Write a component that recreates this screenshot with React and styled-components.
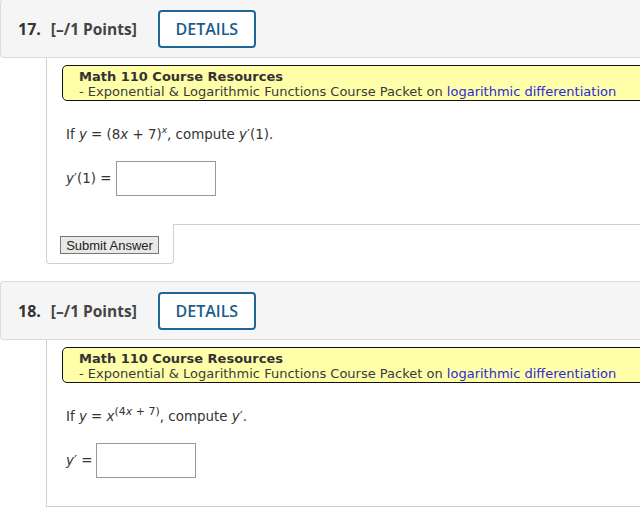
import React from 'react'
import { styled, createGlobalStyle } from 'styled-components'

const GlobalStyle = createGlobalStyle`
  html, body {
    margin: 0;
    padding: 0;
    background: #fff;
    overflow: hidden;
  }
`

function Question({ number, prompt, answerLabel, inputOffset, submit }) {
  return (
    <QuestionWrap>
      <Header>
        <Number>{number}.</Number>
        <Points>[–/1 Points]</Points>
        <DetailsButton>DETAILS</DetailsButton>
      </Header>
      <Body>
        <Content closed={!submit}>
          <Resources>
            <ResTitle>Math 110 Course Resources</ResTitle>
            <div>
              - Exponential &amp; Logarithmic Functions Course Packet on{' '}
              <ResLink>logarithmic differentiation</ResLink>
            </div>
          </Resources>
          <Prompt>{prompt}</Prompt>
          <AnswerRow>
            <span>{answerLabel}</span>
            <AnswerInput type="text" offset={inputOffset} />
          </AnswerRow>
        </Content>
        {submit && (
          <Footer>
            <SubmitTab>
              <SubmitButton>Submit Answer</SubmitButton>
            </SubmitTab>
            <FooterRest />
          </Footer>
        )}
      </Body>
    </QuestionWrap>
  )
}

function App() {
  return (
    <Page>
      <GlobalStyle />
      <Question
        number={17}
        submit
        inputOffset={5}
        prompt={
          <>
            If <i>y</i> = (8<i>x</i> + 7)<Sup><i>x</i></Sup>, compute <i>y</i>′(1).
          </>
        }
        answerLabel={
          <>
            <i>y</i>′(1) =
          </>
        }
      />
      <Question
        number={18}
        inputOffset={4}
        prompt={
          <>
            If <i>y</i> = <i>x</i>
            <BigSup>(4<i>x</i> + 7)</BigSup>, compute <i>y</i>′.
          </>
        }
        answerLabel={
          <>
            <i>y</i>′ =
          </>
        }
      />
    </Page>
  )
}

export default App

const Page = styled.div`
  margin-top: -1px;
  width: 640px;
`

const QuestionWrap = styled.div`
  margin-bottom: 17px;
`

const Header = styled.div`
  display: flex;
  align-items: center;
  height: 57px;
  padding-left: 17px;
  background: #f5f5f5;
  border: 1px solid #dcdcdc;
  border-right: none;
  border-radius: 4px 0 0 4px;
`

const Number = styled.span`
  font-family: 'Open Sans', sans-serif;
  font-weight: 700;
  font-size: 16px;
  color: #333;
  margin-right: 10px;
`

const Points = styled.span`
  font-family: 'Open Sans', sans-serif;
  font-weight: 700;
  font-size: 15.5px;
  color: #444;
`

const DetailsButton = styled.div`
  margin-left: 21px;
  width: 98px;
  height: 38px;
  box-sizing: border-box;
  border: 2px solid #1e6698;
  border-radius: 4px;
  background: #fff;
  color: #1b5d8c;
  font-family: 'Open Sans', sans-serif;
  font-weight: 600;
  font-size: 16px;
  display: flex;
  align-items: center;
  justify-content: center;
`

const Body = styled.div`
  margin-left: 46px;
`

const Content = styled.div`
  overflow: hidden;
  border-left: 1px solid #cfcfcf;
  border-bottom: ${p => (p.closed ? '1px solid #cfcfcf' : 'none')};
  padding: 7px 0 28px 15px;
  font-family: 'DejaVu Sans', Verdana, sans-serif;
  font-size: 13.4px;
  color: #333;
`

const Resources = styled.div`
  box-sizing: border-box;
  width: 582px;
  background: #ffffaa;
  border: 1px solid #111;
  border-radius: 5px 0 0 5px;
  padding: 3px 0 1px 16px;
  line-height: 15px;
  font-size: 13px;
  color: #3a3a3a;
  white-space: nowrap;
`

const ResTitle = styled.div`
  font-weight: 700;
  color: #333;
`

const ResLink = styled.span`
  color: #2a2ad6;
`

const Prompt = styled.div`
  margin-top: 26px;
  padding-left: 4px;
  line-height: 16px;
`

const Sup = styled.sup`
  font-size: 9px;
  vertical-align: 6px;
  line-height: 0;
`

const BigSup = styled.sup`
  font-size: 11px;
  vertical-align: 6px;
  line-height: 0;
`

const AnswerRow = styled.div`
  margin-top: 18px;
  padding-left: 4px;
  display: flex;
  align-items: center;
`

const AnswerInput = styled.input`
  margin: 0 0 0 ${p => p.offset}px;
  width: 100px;
  height: 35px;
  box-sizing: border-box;
  border: 1px solid #999;
  background: #fff;
`

const Footer = styled.div`
  display: flex;
`

const SubmitTab = styled.div`
  border: 1px solid #cfcfcf;
  border-top: none;
  border-radius: 0 0 4px 4px;
  padding: 12px 14px 9px 13px;
`

const SubmitButton = styled.button`
  display: block;
  width: 99px;
  height: 18px;
  padding: 0;
  box-sizing: border-box;
  background: #e8e8e8;
  border: 1px solid #777;
  font-family: 'Liberation Sans', Arial, sans-serif;
  font-size: 13px;
  color: #222;
`

const FooterRest = styled.div`
  flex: 1;
  border-top: 1px solid #cfcfcf;
`
